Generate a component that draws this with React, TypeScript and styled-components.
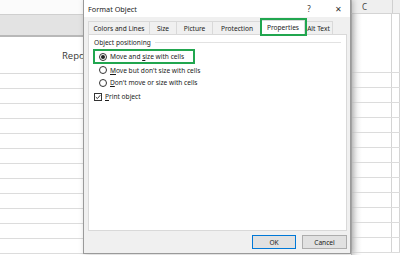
import React from 'react';
import styled, { createGlobalStyle } from 'styled-components';

const GlobalStyle = createGlobalStyle`
  html, body {
    margin: 0;
    padding: 0;
    background: #ffffff;
  }
  body {
    width: 400px;
    height: 255px;
    overflow: hidden;
    font-family: "Noto Sans", "Open Sans", Arial, sans-serif;
  }
`;

const Sheet = styled.div`
  position: relative;
  width: 400px;
  height: 255px;
  display: grid;
  grid-template-columns: 351px 49px;
  overflow: hidden;
  background: #ffffff;
`;

const LeftPane = styled.div`
  display: flex;
  flex-direction: column;
`;

const TopStrip = styled.div`
  height: 14px;
  background: #fbfbfb;
  border-bottom: 1px solid #cfcfcf;
`;

const HeaderBand = styled.div`
  height: 20px;
  background: #e3e3e3;
  border-bottom: 2px solid #b8b8b8;
`;

const TitleRow = styled.div`
  height: 36px;
  display: flex;
  align-items: center;
  padding-left: 62px;
  border-bottom: 1px solid #dadada;
  font-family: "Open Sans", "Noto Sans", sans-serif;
  font-size: 9.5px;
  color: #3a3a3a;
`;

const Row = styled.div`
  height: 14px;
  flex: none;
  border-bottom: 1px solid #dcdcdc;
`;

const RightPane = styled.div`
  display: flex;
  flex-direction: column;
  background: #ffffff;
`;

const ColHeader = styled.div`
  height: 13px;
  display: grid;
  grid-template-columns: 41px 1fr;
  background: #efefef;
  border-bottom: 1px solid #d4d4d4;
  border-left: 1px solid #c4c4c4;
`;

const ColCell = styled.div`
  display: flex;
  align-items: center;
  padding-left: 10px;
  font-size: 8px;
  color: #444;
  border-right: 1px solid #d0d0d0;
`;

const RightBody = styled.div`
  flex: 1;
  display: flex;
  flex-direction: column;
  border-left: 1px solid #c4c4c4;
  background: linear-gradient(90deg, #e2e2e2 0px, #f6f6f6 6px, #ffffff 10px);
`;

const RightRow = styled.div<{ $h: number }>`
  height: ${p => p.$h}px;
  flex: none;
  display: grid;
  grid-template-columns: 40px 1fr;
  border-bottom: 1px solid #dcdcdc;
`;

const RightCell = styled.div`
  border-right: 1px solid #d4d4d4;
`;

const Dialog = styled.div`
  position: absolute;
  left: 83px;
  top: -1px;
  width: 266px;
  height: 253px;
  background: #f0f0f0;
  border: 1px solid #9a9a9a;
  box-shadow: 2px 0 6px rgba(0, 0, 0, 0.25);
  display: flex;
  flex-direction: column;
  font-size: 6.6px;
  color: #1a1a1a;
`;

const TitleBar = styled.div`
  height: 20px;
  background: #ffffff;
  display: flex;
  align-items: center;
  padding: 0 0 0 4px;
  font-size: 7.3px;
  color: #222;
`;

const TitleText = styled.span`
  flex: 1;
`;

const TitleButton = styled.span<{ $w: number }>`
  width: ${p => p.$w}px;
  text-align: center;
  font-size: 8px;
  color: #333;
`;

const Body = styled.div`
  flex: 1;
  display: flex;
  flex-direction: column;
  padding: 2px 3px 4px 4px;
`;

const Tabs = styled.div`
  display: flex;
  height: 15px;
  align-items: flex-end;
`;

const Tab = styled.div<{ $w: number; $active?: boolean }>`
  width: ${p => p.$w}px;
  height: ${p => (p.$active ? 14 : 13)}px;
  box-sizing: border-box;
  display: flex;
  align-items: center;
  justify-content: center;
  background: ${p => (p.$active ? '#ffffff' : '#f0f0f0')};
  border-top: 1px solid #d9d9d9;
  border-right: 1px solid #d9d9d9;
  font-size: 6.6px;
  position: relative;
  outline: ${p => (p.$active ? '2px solid #21a64f' : 'none')};
  z-index: ${p => (p.$active ? 1 : 0)};

  &:first-child {
    border-left: 1px solid #d9d9d9;
  }
`;

const Panel = styled.div`
  height: 192px;
  background: #ffffff;
  border: 1px solid #d9d9d9;
  padding: 3px 4px 0 4px;
  display: flex;
  flex-direction: column;
`;

const GroupLabel = styled.div`
  display: flex;
  align-items: center;
  gap: 4px;
  height: 8px;
  padding-left: 1px;

  &::after {
    content: '';
    flex: 1;
    height: 1px;
    background: #e2e2e2;
    margin-right: 1px;
  }
`;

const Options = styled.div`
  display: flex;
  flex-direction: column;
  margin-top: 3px;
`;

const Option = styled.div<{ $highlight?: boolean }>`
  display: flex;
  align-items: center;
  gap: 3px;
  box-sizing: border-box;
  width: ${p => (p.$highlight ? '102px' : 'auto')};
  padding-left: ${p => (p.$highlight ? '4px' : '6px')};
  border: ${p => (p.$highlight ? '2px solid #21a64f' : 'none')};
  height: ${p => (p.$highlight ? '15px' : '12.5px')};
`;

const Radio = styled.span<{ $checked?: boolean }>`
  width: 8px;
  height: 8px;
  box-sizing: border-box;
  border-radius: 50%;
  border: 1px solid #333;
  background: #fff;
  display: flex;
  align-items: center;
  justify-content: center;

  &::after {
    content: '';
    display: ${p => (p.$checked ? 'block' : 'none')};
    width: 4px;
    height: 4px;
    border-radius: 50%;
    background: #222;
  }
`;

const CheckRow = styled.div`
  display: flex;
  align-items: center;
  gap: 3px;
  margin-top: 3px;
  padding-left: 1px;
`;

const Checkbox = styled.span`
  width: 8px;
  height: 8px;
  box-sizing: border-box;
  border: 1px solid #333;
  background: #fff;
  display: flex;
  align-items: center;
  justify-content: center;
`;

const Footer = styled.div`
  display: flex;
  justify-content: flex-end;
  gap: 6px;
  margin-top: 4px;
`;

const Button = styled.button<{ $default?: boolean }>`
  width: ${p => (p.$default ? 44 : 45)}px;
  height: 14px;
  padding: 0;
  font-family: inherit;
  font-size: 6.6px;
  color: #1a1a1a;
  background: #e1e1e1;
  border: 1px solid ${p => (p.$default ? '#0078d7' : '#adadad')};
`;

const U = styled.span`
  text-decoration: underline;
`;

function Check() {
  return (
    <svg width="6" height="6" viewBox="0 0 6 6">
      <path d="M0.8 3.1 L2.4 4.6 L5.3 1.2" fill="none" stroke="#222" strokeWidth="0.9" />
    </svg>
  );
}

const leftRows = Array.from({ length: 12 });
const rightRows = Array.from({ length: 12 });

export default function App() {
  return (
    <>
      <GlobalStyle />
      <Sheet>
        <LeftPane>
          <TopStrip />
          <HeaderBand />
          <TitleRow>Report</TitleRow>
          {leftRows.map((_, i) => (
            <Row key={i} />
          ))}
        </LeftPane>
        <RightPane>
          <ColHeader>
            <ColCell>C</ColCell>
            <ColCell />
          </ColHeader>
          <RightBody>
            <RightRow $h={58}>
              <RightCell />
              <RightCell />
            </RightRow>
            {rightRows.map((_, i) => (
              <RightRow key={i} $h={14}>
                <RightCell />
                <RightCell />
              </RightRow>
            ))}
          </RightBody>
        </RightPane>

        <Dialog>
          <TitleBar>
            <TitleText>Format Object</TitleText>
            <TitleButton $w={34}>?</TitleButton>
            <TitleButton $w={24}>✕</TitleButton>
          </TitleBar>
          <Body>
            <Tabs>
              <Tab $w={62}>Colors and Lines</Tab>
              <Tab $w={27}>Size</Tab>
              <Tab $w={36}>Picture</Tab>
              <Tab $w={49}>Protection</Tab>
              <Tab $w={43} $active>Properties</Tab>
              <Tab $w={28}>Alt Text</Tab>
            </Tabs>
            <Panel>
              <GroupLabel>Object positioning</GroupLabel>
              <Options>
                <Option $highlight>
                  <Radio $checked />
                  <span>
                    Move and <U>s</U>ize with cells
                  </span>
                </Option>
                <Option>
                  <Radio />
                  <span>
                    <U>M</U>ove but don't size with cells
                  </span>
                </Option>
                <Option>
                  <Radio />
                  <span>
                    <U>D</U>on't move or size with cells
                  </span>
                </Option>
              </Options>
              <CheckRow>
                <Checkbox>
                  <Check />
                </Checkbox>
                <span>
                  <U>P</U>rint object
                </span>
              </CheckRow>
            </Panel>
            <Footer>
              <Button $default>OK</Button>
              <Button>Cancel</Button>
            </Footer>
          </Body>
        </Dialog>
      </Sheet>
    </>
  );
}
